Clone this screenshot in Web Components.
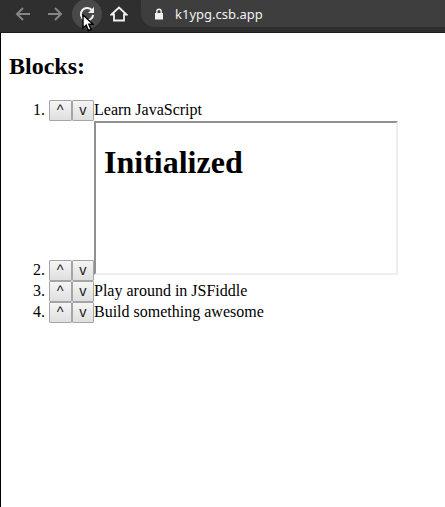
<!DOCTYPE html>
<html>
<head>
<meta charset="utf-8">
<title>Blocks</title>
<style>
  html, body { margin: 0; padding: 0; height: 100%; background: #fff; }
  body { overflow: hidden; }
</style>
</head>
<body>
<browser-bar url="k1ypg.csb.app"></browser-bar>
<page-area>
  <h2 slot="title">Blocks:</h2>
  <block-item>Learn JavaScript</block-item>
  <block-item><frame-box>Initialized</frame-box></block-item>
  <block-item>Play around in JSFiddle</block-item>
  <block-item>Build something awesome</block-item>
</page-area>

<script>
// Top strip of the browser, cropped at the window's edge
class BrowserBar extends HTMLElement {
    constructor() {
        super();
        this.attachShadow({ mode: 'open' });
    }

    connectedCallback() {
        const url = this.getAttribute('url') || '';
        this.shadowRoot.innerHTML = `
            <style>
                :host {
                    display: block;
                    height: 33px;
                    background: #2f2f2f;
                    border-bottom: 1px solid #1c1c1c;
                    box-sizing: border-box;
                    position: relative;
                    overflow: hidden;
                }
                .bar {
                    display: flex;
                    align-items: center;
                    height: 27px;
                    padding-left: 14px;
                }
                .btn { width: 18px; height: 18px; flex: none; display: block; }
                .fwd { margin-left: 14px; }
                .reload { margin-left: 14px; position: relative; width: 18px; height: 18px; flex: none; }
                .reload::before {
                    content: '';
                    position: absolute;
                    left: -6px; top: -6px;
                    width: 30px; height: 30px;
                    border-radius: 50%;
                    background: #494949;
                }
                .reload svg { position: absolute; left: 0; top: 0; width: 18px; height: 18px; }
                .home { margin-left: 14px; margin-top: 1px; }
                .omni {
                    margin-left: 13px;
                    flex: 1;
                    height: 40px;
                    margin-top: -13px;
                    padding-top: 13px;
                    box-sizing: border-box;
                    border-radius: 14px 0 0 14px;
                    background: #3e3e3e;
                    display: flex;
                    align-items: center;
                    padding-left: 12px;
                    color: #f1f1f1;
                    font: 13px "Noto Sans", "Open Sans", sans-serif;
                }
                .lock { width: 12px; height: 12px; margin-right: 10px; flex: none; }
                .cursor { position: absolute; left: 82px; top: 14px; width: 12px; height: 18px; }
            </style>
            <div class="bar">
                <svg class="btn" viewBox="0 0 18 18" fill="none" stroke="#858585" stroke-width="2"><path d="M16 9H3M9 3 3 9l6 6"/></svg>
                <svg class="btn fwd" viewBox="0 0 18 18" fill="none" stroke="#858585" stroke-width="2"><path d="M2 9h13M9 3l6 6-6 6"/></svg>
                <div class="reload">
                    <svg viewBox="0 0 18 18" fill="none" stroke="#f1f1f1" stroke-width="2"><path d="M14.4 6A6.2 6.2 0 1 0 15.2 10"/><path d="M16 2v6h-6" fill="#f1f1f1" stroke="none"/></svg>
                </div>
                <svg class="btn home" viewBox="0 0 18 18" fill="none" stroke="#f1f1f1" stroke-width="1.8"><path d="M1.5 9.5 9 2.5l7.5 7H14v6H4v-6z" stroke-linejoin="miter"/></svg>
                <div class="omni">
                    <svg class="lock" viewBox="0 0 12 12"><path fill="#f1f1f1" d="M2 5h8v6.5H2z"/><path fill="none" stroke="#f1f1f1" stroke-width="1.4" d="M3.8 5V3.4a2.2 2.2 0 0 1 4.4 0V5"/></svg>
                    <span>${url}</span>
                </div>
            </div>
            <svg class="cursor" viewBox="0 0 12 18"><path d="M1 1v13l3.2-2.8 2.3 5.3 2.6-1.1L6.8 10.2H11z" fill="#fff" stroke="#000" stroke-width="1.4"/></svg>
        `;
    }
}

// White page below the bar, with the black line on its left
class PageArea extends HTMLElement {
    constructor() {
        super();
        this.attachShadow({ mode: 'open' });
    }

    connectedCallback() {
        this.shadowRoot.innerHTML = `
            <style>
                :host {
                    display: block;
                    height: 474px;
                    box-sizing: border-box;
                    border-left: 1px solid #000;
                    padding: 8px;
                    font: 16px "Liberation Serif", serif;
                    color: #000;
                }
                ::slotted(h2) {
                    font-size: 24px;
                    font-weight: bold;
                    margin: 12px 0 20px;
                }
                ol { margin: 0; padding: 0 0 0 40px; }
            </style>
            <slot name="title"></slot>
            <ol><slot></slot></ol>
        `;
    }
}

// One list row: the marker comes from display: list-item
class BlockItem extends HTMLElement {
    constructor() {
        super();
        this.attachShadow({ mode: 'open' });
    }

    connectedCallback() {
        this.shadowRoot.innerHTML = `
            <style>
                :host { display: list-item; list-style: decimal; }
                button {
                    font: 13.33px "Liberation Sans", Arial, sans-serif;
                    color: #222;
                    background: linear-gradient(#f5f5f5, #dfdfdf);
                    border: 1px solid #a5a5a5;
                    border-radius: 1px;
                    padding: 1px 6px;
                    margin: 0;
                    height: 21px;
                    width: 22.5px;
                    box-sizing: border-box;
                }
                span { font-size: 14.5px; line-height: 1; }
            </style>
            <button><span>^</span></button><button><span>v</span></button><slot></slot>
        `;
    }
}

// The embedded document's box, with the default inset frame
class FrameBox extends HTMLElement {
    constructor() {
        super();
        this.attachShadow({ mode: 'open' });
    }

    connectedCallback() {
        this.shadowRoot.innerHTML = `
            <style>
                :host {
                    display: inline-block;
                    width: 300px;
                    height: 150px;
                    border: 2px solid;
                    border-color: #919191 #eee #eee #919191;
                    overflow: hidden;
                }
                h1 { font-size: 32px; font-weight: bold; margin: 21.44px 8px; }
            </style>
            <h1><slot></slot></h1>
        `;
    }
}

customElements.define('browser-bar', BrowserBar);
customElements.define('page-area', PageArea);
customElements.define('block-item', BlockItem);
customElements.define('frame-box', FrameBox);
</script>
</body>
</html>
